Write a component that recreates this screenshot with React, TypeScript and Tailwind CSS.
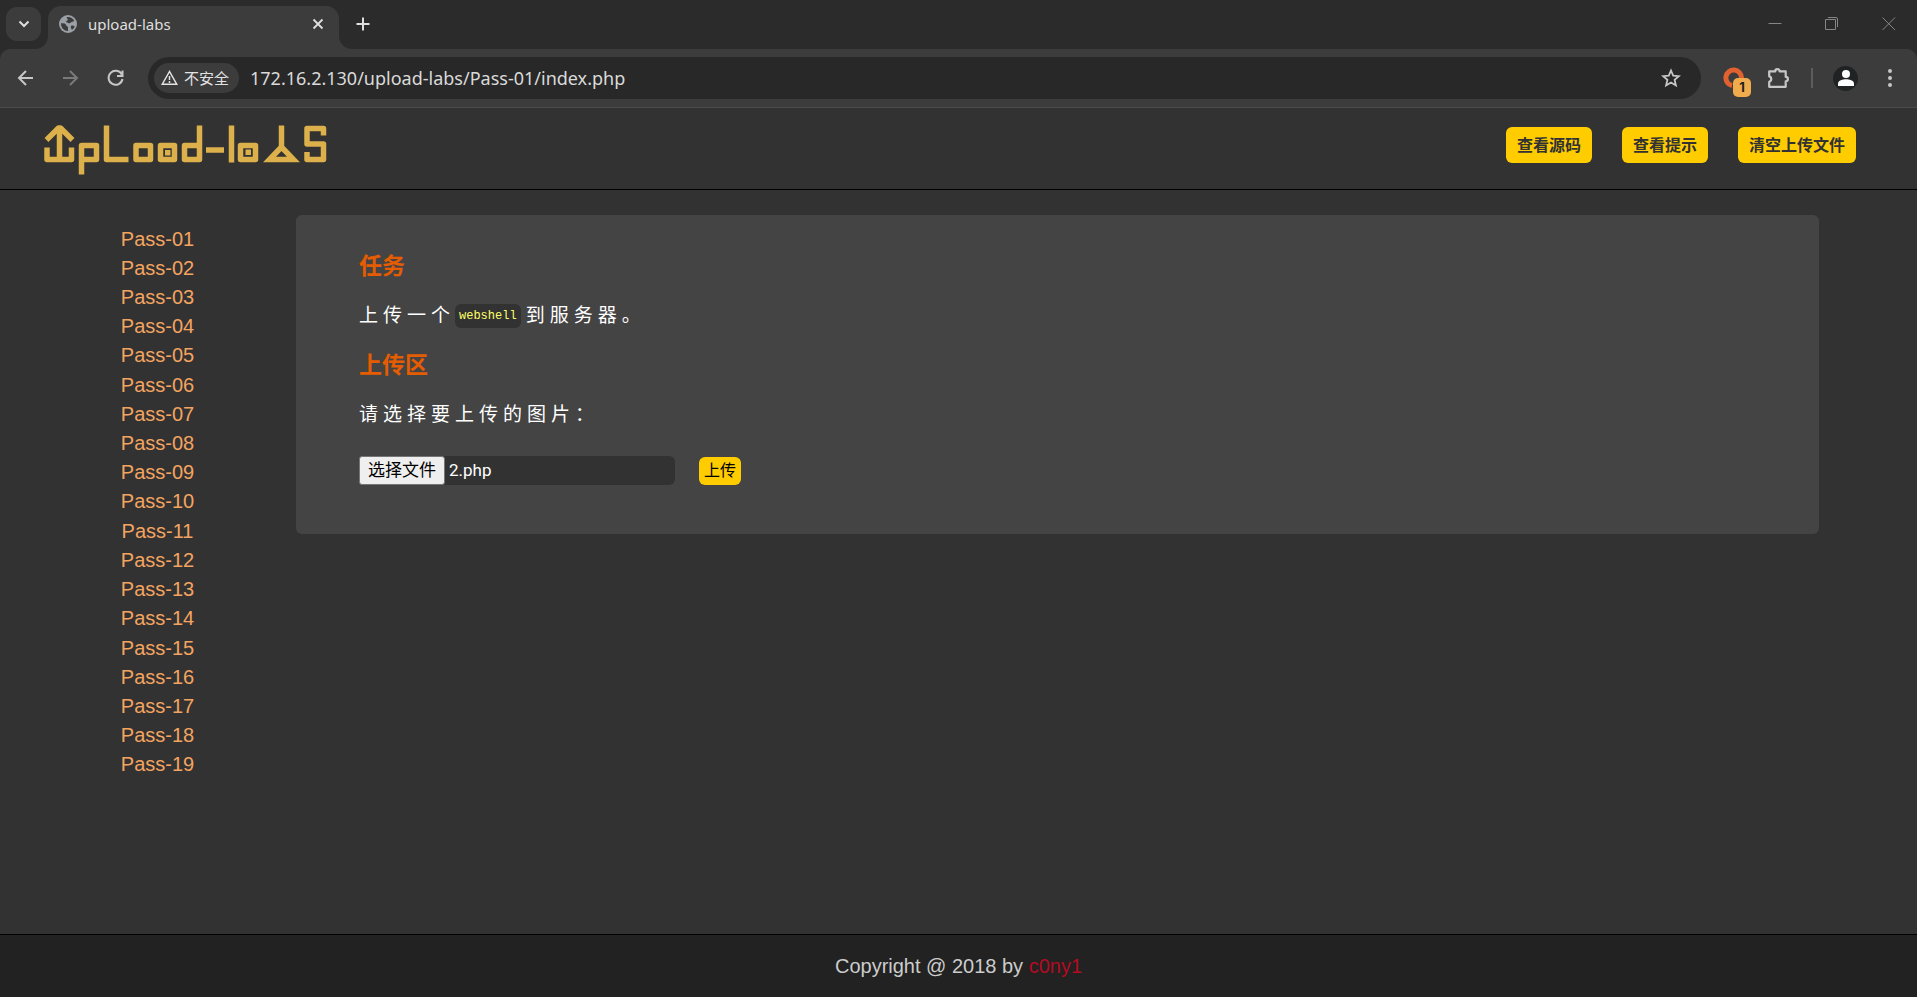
import type { ReactNode } from "react";

const passes = Array.from({ length: 19 }, (_, i) => `Pass-${String(i + 1).padStart(2, "0")}`);

const headerActions = ["查看源码", "查看提示", "清空上传文件"];

function Icon({ size = 20, children }: { size?: number; children: ReactNode }) {
  return (
    <svg width={size} height={size} viewBox="0 0 20 20" fill="none" stroke="currentColor" strokeWidth="2" aria-hidden="true">
      {children}
    </svg>
  );
}

function TabStrip() {
  return (
    <div className="flex h-[49px] items-start bg-[#2b2b2b] text-[#dfdfdf]">
      <button
        aria-label="Search tabs"
        className="mt-[7px] ml-[6px] flex h-[34px] w-[35px] items-center justify-center rounded-[11px] bg-[#3c3c3c]"
      >
        <Icon>
          <path d="M5.5 7.5 10 12l4.5-4.5" />
        </Icon>
      </button>
      <div className="relative mt-[6px] ml-[7px] flex h-[43px] w-[291px] items-center rounded-t-[13px] bg-[#3c3c3c] pr-[11px] pb-[7px] pl-[11px]">
        {/* flared bottom corners of the active tab */}
        <svg className="absolute bottom-0 -left-[13px] text-[#3c3c3c]" width="13" height="13" viewBox="0 0 13 13" aria-hidden="true">
          <path d="M13 0v13H0A13 13 0 0 0 13 0Z" fill="currentColor" />
        </svg>
        <svg className="absolute -right-[13px] bottom-0 text-[#3c3c3c]" width="13" height="13" viewBox="0 0 13 13" aria-hidden="true">
          <path d="M0 0v13h13A13 13 0 0 1 0 0Z" fill="currentColor" />
        </svg>
        <svg width="18" height="18" viewBox="0 0 18 18" aria-hidden="true">
          <circle cx="9" cy="9" r="9" fill="#9aa0a6" />
          <path
            d="M2 8.2c3 0 5 .2 5.2 2.1.1 1.3 1.8.8 1.800 2.200v3.500a7 7 0 0 1-7-7.800ZM7.500 2.200c3.300-.7 6.500 1.200 7.700 3.500-1 1.500-2.600.7-3.300 1.800-.7 1-1.900.9-2.800.4-.8-.5-1.900-.1-2-1.300 0-1.300 1.800-.8 1.600-2.200-.1-.9-.9-1.200-1.200-2.200Zm4.600 8.700c1.400-.9 2.600.6 3.800.2-.5 1.500-1.600 3-3 3.900-.1-1.500-1.900-2.900-.8-4.100Z"
            fill="#3c3c3c"
          />
        </svg>
        <span className="ml-[11px] flex-1 font-['Noto_Sans','Open_Sans',sans-serif] text-[15px] leading-5">upload-labs</span>
        <button aria-label="Close tab" className="flex size-5 items-center justify-center">
          <Icon size={18}>
            <path d="m5 5 10 10M15 5 5 15" />
          </Icon>
        </button>
      </div>
      <button aria-label="New tab" className="mt-[14px] ml-[14px] flex size-5 items-center justify-center">
        <Icon>
          <path d="M10 3.500v13M3.500 10h13" />
        </Icon>
      </button>
      <div className="mt-[13px] mr-[18px] ml-auto flex gap-[37px] text-[#858585]">
        <button aria-label="Minimize">
          <Icon>
            <path d="M3.500 10.500h13" strokeWidth="1" />
          </Icon>
        </button>
        <button aria-label="Restore">
          <Icon>
            <path d="M3.500 6.500h10v10h-10ZM6 4.500h8a1.500 1.500 0 0 1 1.500 1.500v8" strokeWidth="1" />
          </Icon>
        </button>
        <button aria-label="Close">
          <Icon>
            <path d="m3.500 4.500 12.500 12.500m0-12.500-12.500 12.500" strokeWidth="1" />
          </Icon>
        </button>
      </div>
    </div>
  );
}

function Toolbar() {
  return (
    <div className="bg-[#2b2b2b]">
      <div className="flex h-[59px] items-center rounded-t-[10px] border-b border-[#4a4a4a] bg-[#3c3c3c] text-[#c7c7c7]">
        <div className="ml-[16px] flex gap-[25px]">
          <button aria-label="Back">
            <Icon>
              <path d="M17 10H3.500M10 3l-7 7 7 7" />
            </Icon>
          </button>
          <button aria-label="Forward" className="text-[#7a7a7a]" disabled>
            <Icon>
              <path d="M2 10h13.500M9 3l7 7-7 7" />
            </Icon>
          </button>
          <button aria-label="Reload">
            <Icon>
              <path d="M15.800 6.500A7 7 0 1 0 16.500 11M16.500 2.500V8H11" />
            </Icon>
          </button>
        </div>
        <div className="ml-[22px] flex h-[42px] flex-1 items-center rounded-full bg-[#282828] pr-[20px] pl-[6px]">
          <button className="flex h-[30px] items-center gap-[6px] rounded-full bg-[#3c3c3c] pr-[10px] pl-[7px] font-['Noto_Sans_CJK_SC',sans-serif] text-[15px] leading-5 text-[#e3e3e3]">
            <svg width="17" height="16" viewBox="0 0 17 16" fill="none" stroke="currentColor" strokeWidth="1.5" aria-hidden="true">
              <path d="M8.500 1.500 1.300 14.200h14.400ZM8.500 6v4M8.500 11v2" />
            </svg>
            不安全
          </button>
          <input
            aria-label="Address"
            defaultValue="172.16.2.130/upload-labs/Pass-01/index.php"
            className="ml-[11px] min-w-0 flex-1 bg-transparent font-['Noto_Sans','Open_Sans',sans-serif] text-[18px] text-[#dadada] outline-none"
          />
          <button aria-label="Bookmark">
            <Icon>
              <path
                d="m10 2.500 2.200 5.200 5.600.5-4.200 3.700 1.300 5.500-4.900-2.900-4.900 2.900 1.300-5.500-4.200-3.700 5.600-.5Z"
                strokeWidth="1.8"
              />
            </Icon>
          </button>
        </div>
        <button aria-label="Extension, 1 item" className="relative ml-[22px] size-[22px]">
          <svg width="22" height="22" viewBox="0 0 22 22" fill="none" aria-hidden="true">
            <path d="M9 18.500A7.800 7.800 0 1 1 18.500 11" stroke="#e2622f" strokeWidth="5" />
          </svg>
          <span className="absolute -right-[6px] -bottom-[8px] flex h-[19px] w-[18px] items-center justify-center rounded-[5px] bg-[#f0ab4c] font-['Inter',sans-serif] text-[13px] font-bold text-[#1f1f1f]">
            1
          </span>
        </button>
        <button aria-label="Extensions" className="ml-[22px]">
          <Icon size={22}>
            <path d="M2 4h5.500a2 2 0 0 1 4 0H17v5a1.600 1.600 0 0 1 0 4v5H2v-4.500a2.600 2.600 0 0 0 0-5Z" strokeLinejoin="round" />
          </Icon>
        </button>
        <span className="ml-[22px] h-5 w-[2px] bg-[#5c5c5c]" />
        <button aria-label="Profile" className="ml-[20px] flex size-[25px] items-center justify-center rounded-full bg-[#1f2323] text-white">
          <svg width="16" height="16" viewBox="0 0 16 16" fill="currentColor" aria-hidden="true">
            <circle cx="8" cy="4" r="4" />
            <path d="M0 16v-2.500C0 10.500 5 9.300 8 9.300s8 1.200 8 4.200V16Z" />
          </svg>
        </button>
        <button aria-label="Menu" className="mr-[17px] ml-[22px]">
          <svg width="20" height="20" viewBox="0 0 20 20" fill="currentColor" aria-hidden="true">
            <circle cx="10" cy="3" r="2" />
            <circle cx="10" cy="10" r="2" />
            <circle cx="10" cy="17" r="2" />
          </svg>
        </button>
      </div>
    </div>
  );
}

function Logo() {
  return (
    <svg
      width="283"
      height="52"
      viewBox="44 124 283 52"
      fill="none"
      stroke="#dcb04a"
      strokeWidth="5.5"
      strokeLinejoin="round"
      role="img"
      aria-label="upload-labs"
    >
      <path d="m46.500 140 12-12h2l12 12M59.500 127v32M47 147.500v12h24.500v-12" />
      <path d="M81.500 174.500v-29h15v14h-15" />
      <path d="M106.500 125.500v34h22" />
      <rect x="136" y="145.500" width="14.500" height="14" />
      <rect x="160.500" y="145.500" width="14" height="14" />
      <rect x="165" y="150" width="5.500" height="5.500" fill="#dcb04a" stroke="none" />
      <path d="M199.500 125.500v34h-15v-14h15" />
      <path d="M206 150h18M231.500 125.500v37" />
      <rect x="240.500" y="145.500" width="15" height="14" />
      <rect x="245.500" y="149.500" width="5.500" height="5.500" fill="#dcb04a" stroke="none" />
      <path d="M281.500 125.500v22M281.500 147l-12 12.500h24Z" strokeLinejoin="miter" />
      <path d="M323.500 135.500v-7H307v15.500h16.500v15.500H307V152" />
    </svg>
  );
}

function PageHeader() {
  return (
    <header className="flex h-[82px] items-start border-b border-black pr-[61px] pl-[44px]">
      <a href="/" className="mt-[16px]">
        <Logo />
      </a>
      <div className="mt-[19px] ml-auto flex gap-[30px]">
        {headerActions.map((action) => (
          <button key={action} className="h-[36px] rounded-[6px] bg-[#ffcc00] px-[11px] pt-[2px] text-[16px] font-bold text-[#323232]">
            {action}
          </button>
        ))}
      </div>
    </header>
  );
}

function Sidebar() {
  return (
    <nav className="ml-[60px] w-[195px] shrink-0 pt-[34px]">
      <ul className="grid h-[555px] auto-rows-fr items-center text-center text-[20px] leading-7 text-[#f4a460]">
        {passes.map((pass) => (
          <li key={pass}>
            <a href={`#${pass}`}>{pass}</a>
          </li>
        ))}
      </ul>
    </nav>
  );
}

function UploadPanel() {
  return (
    <main className="mt-[25px] mr-[98px] ml-[41px] flex-1 rounded-[6px] bg-[#444444] pt-[35px] pb-[49px] pl-[63px] text-white">
      <h3 className="text-[23px] leading-8 font-bold text-[#e65c00]">任务</h3>
      <p className="mt-[18px] flex h-8 items-center text-[19px] tracking-[5px]">
        上传一个
        <code className="mr-[5px] flex h-[24px] items-center rounded-[6px] bg-[#323232] px-[4px] font-['Liberation_Mono',monospace] text-[12px] tracking-normal text-[#ffff66]">
          webshell
        </code>
        到服务器。
      </p>
      <h3 className="mt-[17px] text-[23px] leading-8 font-bold text-[#e65c00]">上传区</h3>
      <form onSubmit={(e) => e.preventDefault()}>
        <p className="mt-[18px] flex h-8 items-center text-[19px] tracking-[5px]">请选择要上传的图片：</p>
        <div className="mt-[25px] flex items-center gap-[24px]">
          <div className="flex h-[29px] w-[316px] items-center rounded-[6px] bg-[#323232]">
            <button type="button" className="h-[29px] rounded-[3px] border border-[#767676] bg-[#efefef] px-[8px] text-[17px] leading-5 text-black">
              选择文件
            </button>
            <span className="ml-[4px] font-['Roboto',sans-serif] text-[17px]">2.php</span>
          </div>
          <button type="submit" className="h-[28px] rounded-[6px] bg-[#ffcc00] px-[5px] text-[16px] leading-5 text-black">
            上传
          </button>
        </div>
      </form>
    </main>
  );
}

export default function App() {
  return (
    <div className="flex min-h-screen flex-col bg-[#323232] font-['Liberation_Sans','Noto_Sans_CJK_SC',sans-serif]">
      <TabStrip />
      <Toolbar />
      <PageHeader />
      <div className="flex flex-1 items-start">
        <Sidebar />
        <UploadPanel />
      </div>
      <footer className="flex h-[63px] items-center justify-center border-t border-black bg-[#222222] text-[20px] text-[#cccccc]">
        <p>
          Copyright @ 2018 by{" "}
          <a href="#c0ny1" className="text-[#b30b22]">
            c0ny1
          </a>
        </p>
      </footer>
    </div>
  );
}
